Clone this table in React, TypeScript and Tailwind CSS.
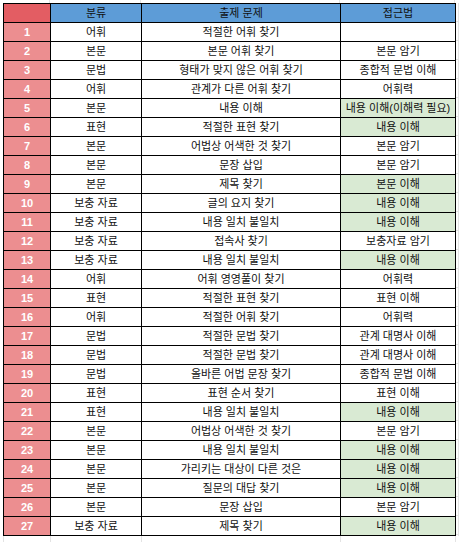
const rows: [string, string, string, boolean][] = [
  ['어휘', '적절한 어휘 찾기', '', false],
  ['본문', '본문 어휘 찾기', '본문 암기', false],
  ['문법', '형태가 맞지 않은 어휘 찾기', '종합적 문법 이해', false],
  ['어휘', '관계가 다른 어휘 찾기', '어휘력', false],
  ['본문', '내용 이해', '내용 이해(이해력 필요)', true],
  ['표현', '적절한 표현 찾기', '내용 이해', true],
  ['본문', '어법상 어색한 것 찾기', '본문 암기', false],
  ['본문', '문장 삽입', '본문 암기', false],
  ['본문', '제목 찾기', '본문 이해', true],
  ['보충 자료', '글의 요지 찾기', '내용 이해', true],
  ['보충 자료', '내용 일치 불일치', '내용 이해', true],
  ['보충 자료', '접속사 찾기', '보충자료 암기', false],
  ['보충 자료', '내용 일치 불일치', '내용 이해', true],
  ['어휘', '어휘 영영풀이 찾기', '어휘력', false],
  ['표현', '적절한 표현 찾기', '표현 이해', false],
  ['어휘', '적절한 어휘 찾기', '어휘력', false],
  ['문법', '적절한 문법 찾기', '관계 대명사 이해', false],
  ['문법', '적절한 문법 찾기', '관계 대명사 이해', false],
  ['문법', '올바른 어법 문장 찾기', '종합적 문법 이해', false],
  ['표현', '표현 순서 찾기', '표현 이해', false],
  ['표현', '내용 일치 불일치', '내용 이해', true],
  ['본문', '어법상 어색한 것 찾기', '본문 암기', false],
  ['본문', '내용 일치 불일치', '내용 이해', true],
  ['본문', '가리키는 대상이 다른 것은', '내용 이해', true],
  ['본문', '질문의 대답 찾기', '내용 이해', true],
  ['본문', '문장 삽입', '본문 암기', false],
  ['보충 자료', '제목 찾기', '내용 이해', true],
]

const cell = 'h-[18px] flex items-center justify-center whitespace-nowrap leading-none'

export default function App() {
  return (
    <div
      className="w-[460px] h-[542px] bg-white overflow-hidden text-[11px] text-[#111]"
      style={{ fontFamily: '"Liberation Sans", "Noto Sans CJK KR", sans-serif' }}
    >
      {/* faint sheet gridlines above the table */}
      <div className="flex h-[3px] pl-[3px]">
        <div className="w-[47px] border-r border-[#e3e3e3]" />
        <div className="w-[91px] border-r border-[#e3e3e3]" />
        <div className="w-[199px] border-r border-[#e3e3e3]" />
        <div className="w-[115px] border-r border-[#e3e3e3]" />
      </div>
      <div className="flex pl-[3px]">
        <div className="bg-black p-px">
          <div className="grid grid-cols-[46px_90px_198px_114px] gap-px">
            <div className={`${cell} bg-[#e35d63]`} />
            <div className={`${cell} bg-[#5d9cd7]`}>분류</div>
            <div className={`${cell} bg-[#5d9cd7]`}>출제 문제</div>
            <div className={`${cell} bg-[#5d9cd7]`}>접근법</div>
            {rows.map(([cat, q, how, green], i) => (
              <div key={i} className="contents">
                <div className={`${cell} bg-[#ec8e90] text-white font-bold`}>{i + 1}</div>
                <div className={`${cell} bg-white`}>{cat}</div>
                <div className={`${cell} bg-white`}>{q}</div>
                <div className={`${cell} ${green ? 'bg-[#d9ead3]' : 'bg-white'}`}>{how}</div>
              </div>
            ))}
          </div>
        </div>
        {/* faint gridlines right of the table */}
        <div className="flex flex-col w-[3px] border-r border-[#e3e3e3]">
          <div className="h-[19px] border-b border-[#e3e3e3]" />
          {rows.map((_, i) => (
            <div key={i} className="h-[19px] border-b border-[#e3e3e3]" />
          ))}
        </div>
      </div>
      {/* faint gridlines below the table */}
      <div className="flex h-[7px] pl-[3px]">
        <div className="w-0 border-l border-[#e3e3e3]" />
        <div className="w-[47px] border-r border-[#e3e3e3]" />
        <div className="w-[91px] border-r border-[#e3e3e3]" />
        <div className="w-[199px] border-r border-[#e3e3e3]" />
        <div className="w-[115px] border-r border-[#e3e3e3]" />
      </div>
    </div>
  )
}
